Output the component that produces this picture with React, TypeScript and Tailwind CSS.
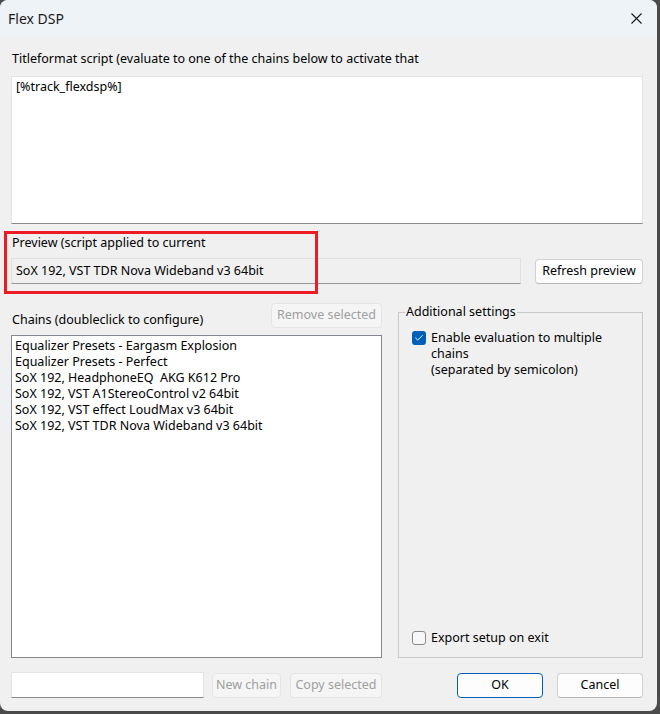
import { Check } from "lucide-react"

const font = { fontFamily: '"Noto Sans", "Liberation Sans", sans-serif' }

function Button({ label, width, disabled, primary }: { label: string; width: string; disabled?: boolean; primary?: boolean }) {
  const base = "h-[25px] rounded-[4px] border text-[12.5px] leading-none flex items-center justify-center shrink-0"
  if (disabled) return <div className={`${base} ${width} bg-[#f5f5f5] border-[#e5e5e5] text-[#a0a0a0]`}>{label}</div>
  if (primary) return <div className={`${base} ${width} bg-[#fdfdfd] border-[#005fb8] text-black`}>{label}</div>
  return <div className={`${base} ${width} bg-[#fdfdfd] border-[#d0d0d0] border-b-[#b8b8b8] text-black`}>{label}</div>
}

export default function App() {
  const chains = [
    "Equalizer Presets - Eargasm Explosion",
    "Equalizer Presets - Perfect",
    "SoX 192, HeadphoneEQ  AKG K612 Pro",
    "SoX 192, VST A1StereoControl v2 64bit",
    "SoX 192, VST effect LoudMax v3 64bit",
    "SoX 192, VST TDR Nova Wideband v3 64bit",
  ]

  return (
    <div className="w-[660px] h-[714px] bg-[#4b4b4b] overflow-hidden" style={font}>
      <div className="relative w-[657px] h-[711px] rounded-[8px] overflow-hidden bg-[#f0f0f0] flex flex-col text-[12.5px] text-black">
        {/* title bar */}
        <div className="h-[37px] bg-[#eef3f8] flex items-center justify-between pl-[8px] pr-[15px] shrink-0">
          <span className="text-[14px] text-[#1a1a1a]">Flex DSP</span>
          <svg width="11" height="11" viewBox="0 0 11 11">
            <path d="M0.5 0.5 L10.5 10.5 M10.5 0.5 L0.5 10.5" stroke="#1a1a1a" strokeWidth="1.1" />
          </svg>
        </div>

        <div className="flex flex-col pl-[11px] pr-[14px]">
          <div className="mt-[14px] h-[16px] leading-[16px] pl-[1px]">
            Titleformat script (evaluate to one of the chains below to activate that
          </div>
          <div className="mt-[9px] h-[148px] bg-white border border-[#e3e3e3] border-b-[#8a8a8a] px-[4px] pt-[2px] leading-[16px]">
            [%track_flexdsp%]
          </div>

          <div className="mt-[11px] h-[16px] leading-[16px] pl-[1px]">Preview (script applied to current</div>
          <div className="mt-[7px] h-[26px] flex items-center justify-between">
            <div className="w-[510px] h-[26px] bg-[#f0f0f0] border border-[#e0e0e0] border-b-[#9a9a9a] px-[4px] flex items-center">
              SoX 192, VST TDR Nova Wideband v3 64bit
            </div>
            <Button label="Refresh preview" width="w-[108px]" />
          </div>

          <div className="mt-[19px] h-[355px] flex gap-[16px]">
            <div className="w-[371px] flex flex-col">
              <div className="h-[32px] flex justify-between items-start">
                <span className="mt-[9px] pl-[1px] leading-[16px]">Chains (doubleclick to configure)</span>
                <Button label="Remove selected" width="w-[111px]" disabled />
              </div>
              <div className="h-[323px] bg-white border border-[#828790] pt-[2px] pl-[3px] leading-[16px]">
                {chains.map((c) => (
                  <div key={c} className="whitespace-pre">{c}</div>
                ))}
              </div>
            </div>

            <div className="w-[245px] mt-[9px] h-[346px] border border-[#c8c8c8] relative flex flex-col pl-[13px] pt-[17px] pb-[11px]">
              <span className="absolute -top-[9px] left-[6px] bg-[#f0f0f0] px-[1px] leading-[16px]">Additional settings</span>
              <div className="flex items-start gap-[5px]">
                <div className="w-[14px] h-[14px] mt-[1px] rounded-[3px] bg-[#005fb8] flex items-center justify-center shrink-0">
                  <Check size={10} color="white" strokeWidth={2.2} />
                </div>
                <div className="leading-[16px]">
                  Enable evaluation to multiple
                  <br />
                  chains
                  <br />
                  (separated by semicolon)
                </div>
              </div>
              <div className="mt-auto flex items-center gap-[5px]">
                <div className="w-[14px] h-[14px] rounded-[3px] border border-[#8a8a8a] bg-[#f7f7f7] shrink-0" />
                <span className="leading-[16px]">Export setup on exit</span>
              </div>
            </div>
          </div>

          <div className="mt-[14px] h-[26px] flex items-center">
            <div className="w-[193px] h-[26px] bg-white border border-[#e3e3e3] border-b-[#8a8a8a]" />
            <div className="ml-[8px]">
              <Button label="New chain" width="w-[69px]" disabled />
            </div>
            <div className="ml-[9px]">
              <Button label="Copy selected" width="w-[92px]" disabled />
            </div>
            <div className="ml-auto flex gap-[14px]">
              <Button label="OK" width="w-[86px]" primary />
              <Button label="Cancel" width="w-[86px]" />
            </div>
          </div>
        </div>

        {/* annotation highlight */}
        <div className="absolute left-[4px] top-[231px] w-[314px] h-[63px] border-[3px] border-[#ed1c24] pointer-events-none" />
      </div>
    </div>
  )
}
